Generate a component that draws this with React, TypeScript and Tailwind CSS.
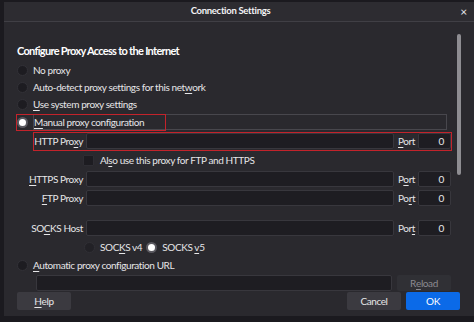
import React from "react";

function Radio({ checked = false, dim = false }: { checked?: boolean; dim?: boolean }) {
  if (checked) {
    return (
      <span className="w-[11px] h-[11px] rounded-full bg-[#5a5960] flex items-center justify-center shrink-0">
        <span className="w-[7px] h-[7px] rounded-full bg-white" />
      </span>
    );
  }
  return (
    <span
      className={
        "w-[11px] h-[11px] rounded-full shrink-0 border " +
        (dim ? "bg-[#222126] border-[#302f35]" : "bg-[#1d1c21] border-[#323137]")
      }
    />
  );
}

function Field({ w }: { w: string }) {
  return <div className={"h-[16px] bg-[#1e1d22] border border-[#38373d] rounded-[2px] " + w} />;
}

function PortBox() {
  return (
    <div className="w-[33px] h-[16px] bg-[#1e1d22] border border-[#38373d] rounded-[2px] flex items-center justify-end pr-[6px] text-[10px] text-[#e8e8ea]">
      0
    </div>
  );
}

function ProxyRow({ label, port, h = "h-[18px]" }: { label: React.ReactNode; port: React.ReactNode; h?: string }) {
  return (
    <div className={"flex items-center ml-[16px] " + h}>
      <div className="w-[50px] flex justify-end whitespace-nowrap">
        <span className="shrink-0">{label}</span>
      </div>
      <div className="ml-[3px]">
        <Field w="w-[308px]" />
      </div>
      <div className="ml-[4px] w-[20px] whitespace-nowrap">{port}</div>
      <PortBox />
    </div>
  );
}

const U = ({ children }: { children: React.ReactNode }) => (
  <span className="underline underline-offset-[2px] decoration-[1px]">{children}</span>
);

export default function App() {
  return (
    <div className="w-[474px] h-[322px] bg-[#1b1a1f] pl-[4px] pt-[2px] overflow-hidden font-['Lato',sans-serif] text-[10px] tracking-[-0.4px] text-[#e6e6e8]">
      <div className="w-[470px] h-[314px] bg-[#2a292e] flex flex-col">
        {/* title bar */}
        <div className="h-[20px] shrink-0 flex items-center bg-[#2d2c31] border-b border-[#403f45]">
          <div className="flex-1 text-center font-bold text-[9.5px] tracking-[-0.3px] pl-[2px] text-[#f3f3f5]">
            Connection Settings
          </div>
          <div className="w-[17px] mr-[2px] text-center text-[12px] leading-none text-[#e8e8ea]">×</div>
        </div>

        {/* content */}
        <div className="relative h-[269px] shrink-0 overflow-hidden px-[13px]">
          <div className="mt-[22px] h-[14px] leading-[14px] text-[11px] tracking-[-0.7px] font-bold text-white whitespace-nowrap">
            Configure Proxy Access to the Internet
          </div>

          <div className="mt-[4px] h-[16px] flex items-center gap-[5px]">
            <Radio />
            <span>No proxy</span>
          </div>
          <div className="mt-[1px] h-[16px] flex items-center gap-[5px]">
            <Radio />
            <span>
              Auto-detect proxy settings for this net<U>w</U>ork
            </span>
          </div>
          <div className="mt-[1px] h-[17px] flex items-center gap-[5px]">
            <Radio />
            <span>
              <U>U</U>se system proxy settings
            </span>
          </div>
          <div className="relative mt-[1px] h-[17px] flex items-center gap-[5px]">
            <Radio checked />
            <span className="w-[414px] h-[16px] self-start border border-[#48474d] flex items-center">
              <U>M</U>anual proxy configuration
            </span>
            <div className="absolute left-[-1px] top-0 w-[150px] h-[17px] border-[1.5px] border-[#c3232b]" />
          </div>

          <div className="relative">
            <ProxyRow
              h="h-[20px]"
              label={
                <>
                  HTTP Pro<U>x</U>y
                </>
              }
              port={
                <>
                  <U>P</U>ort
                </>
              }
            />
            <div className="absolute left-[16px] top-[1px] w-[419px] h-[19px] border-[1.5px] border-[#c3232b]" />
          </div>

          <div className="h-[18px] flex items-center ml-[66px] gap-[6px]">
            <span className="w-[11px] h-[11px] bg-[#1d1c21] border border-[#2e2d33] rounded-[1px]" />
            <span>
              Al<U>s</U>o use this proxy for FTP and HTTPS
            </span>
          </div>

          <div className="mt-[1px]">
            <ProxyRow
              label={
                <>
                  <U>H</U>TTPS Proxy
                </>
              }
              port={
                <>
                  P<U>o</U>rt
                </>
              }
            />
          </div>
          <div className="mt-[1px]">
            <ProxyRow
              label={
                <>
                  <U>F</U>TP Proxy
                </>
              }
              port={
                <>
                  Po<U>r</U>t
                </>
              }
            />
          </div>
          <div className="mt-[12px]">
            <ProxyRow
              label={
                <>
                  SO<U>C</U>KS Host
                </>
              }
              port={
                <>
                  Por<U>t</U>
                </>
              }
            />
          </div>

          <div className="mt-[1px] h-[18px] flex items-center ml-[67px]">
            <Radio dim />
            <span className="ml-[5px]">
              SOC<U>K</U>S v4
            </span>
            <span className="ml-[4px] flex">
              <Radio checked />
            </span>
            <span className="ml-[5px]">
              SOCKS <U>v</U>5
            </span>
          </div>

          <div className="h-[18px] flex items-center gap-[5px]">
            <Radio />
            <span>
              <U>A</U>utomatic proxy configuration URL
            </span>
          </div>

          <div className="mt-[1px] flex items-center ml-[19px]">
            <Field w="w-[356px]" />
            <div className="ml-[5px] w-[54px] h-[16px] bg-[#303035] rounded-[2px] flex items-center justify-center text-[#8b8a90]">
              R<U>e</U>load
            </div>
          </div>

          <div className="absolute left-[453px] top-[12px] w-[4px] h-[141px] rounded-full bg-[#8e8d92]" />
        </div>

        {/* footer */}
        <div className="flex-1 flex items-start pt-[1px] pl-[13px] pr-[14px]">
          <div className="w-[54px] h-[18px] bg-[#3b3a40] rounded-[2px] flex items-center justify-center">
            <U>H</U>elp
          </div>
          <div className="flex-1" />
          <div className="w-[54px] h-[18px] bg-[#3b3a40] rounded-[2px] flex items-center justify-center">Cancel</div>
          <div className="ml-[5px] w-[54px] h-[18px] bg-[#0b6ae8] rounded-[2px] flex items-center justify-center text-white">
            OK
          </div>
        </div>
      </div>
    </div>
  );
}
